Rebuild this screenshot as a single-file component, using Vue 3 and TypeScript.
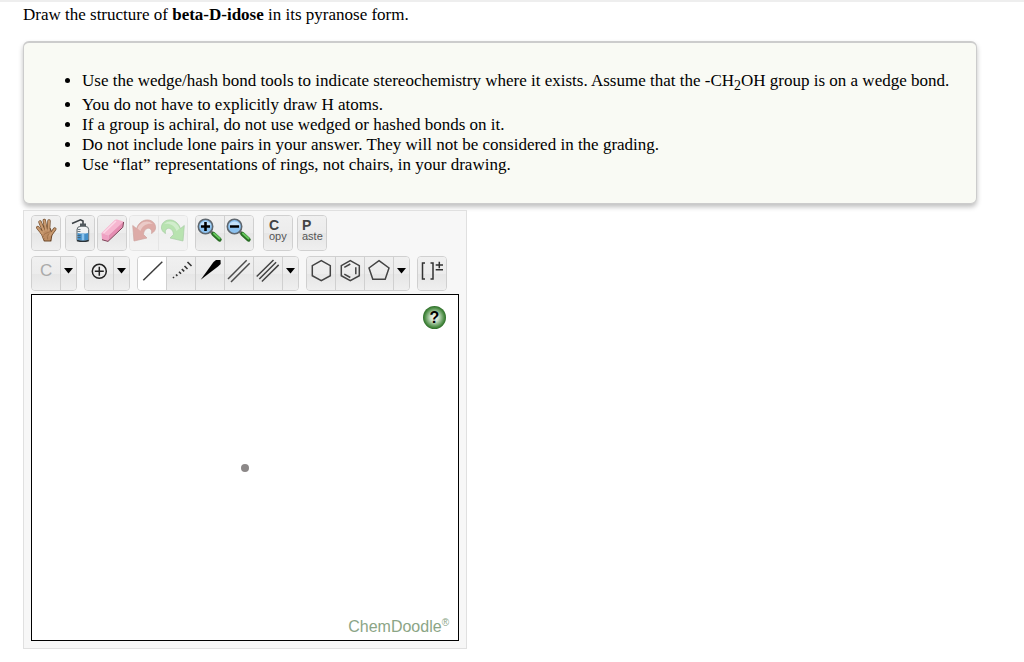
<script setup lang="ts">
import { ref } from 'vue'

interface Tool {
  id: string
  label: string
  disabled?: boolean
}

interface Group {
  gap: 'tight' | 'near' | 'apart' | 'wide'
  tools: Tool[]
}

const editRow: Group[] = [
  { gap: 'near', tools: [{ id: 'move', label: 'Move' }] },
  { gap: 'tight', tools: [{ id: 'clear', label: 'Clear' }] },
  { gap: 'tight', tools: [{ id: 'erase', label: 'Erase' }] },
  {
    gap: 'apart',
    tools: [
      { id: 'undo', label: 'Undo', disabled: true },
      { id: 'redo', label: 'Redo', disabled: true },
    ],
  },
  {
    gap: 'wide',
    tools: [
      { id: 'zoom-in', label: 'Increase scale' },
      { id: 'zoom-out', label: 'Decrease scale' },
    ],
  },
  { gap: 'near', tools: [{ id: 'copy', label: 'Copy' }] },
  { gap: 'tight', tools: [{ id: 'paste', label: 'Paste' }] },
]

const drawRow: Group[] = [
  {
    gap: 'apart',
    tools: [
      { id: 'carbon', label: 'Carbon' },
      { id: 'more-elements', label: 'More elements' },
    ],
  },
  {
    gap: 'apart',
    tools: [
      { id: 'charge', label: 'Increase charge' },
      { id: 'more-charges', label: 'More attributes' },
    ],
  },
  {
    gap: 'apart',
    tools: [
      { id: 'single', label: 'Single bond' },
      { id: 'hashed', label: 'Recessed bond' },
      { id: 'wedge', label: 'Protruding bond' },
      { id: 'double', label: 'Double bond' },
      { id: 'triple', label: 'Triple bond' },
      { id: 'more-bonds', label: 'More bonds' },
    ],
  },
  {
    gap: 'apart',
    tools: [
      { id: 'cyclohexane', label: 'Cyclohexane ring' },
      { id: 'benzene', label: 'Benzene ring' },
      { id: 'cyclopentane', label: 'Cyclopentane ring' },
      { id: 'more-rings', label: 'More rings' },
    ],
  },
  { gap: 'tight', tools: [{ id: 'brackets', label: 'Bracket with charge' }] },
]

const rows = [editRow, drawRow]
const active = ref('single')
const isMenu = (id: string): boolean => id.startsWith('more-')
const select = (tool: Tool): void => {
  if (!tool.disabled && !isMenu(tool.id)) active.value = tool.id
}
</script>

<template>
  <main class="page">
    <p class="question">Draw the structure of <b>beta-D-idose</b> in its pyranose form.</p>

    <section class="notes">
      <ul>
        <li>Use the wedge/hash bond tools to indicate stereochemistry where it exists. Assume that the -CH<sub>2</sub>OH group is on a wedge bond.</li>
        <li>You do not have to explicitly draw H atoms.</li>
        <li>If a group is achiral, do not use wedged or hashed bonds on it.</li>
        <li>Do not include lone pairs in your answer. They will not be considered in the grading.</li>
        <li>Use “flat” representations of rings, not chairs, in your drawing.</li>
      </ul>
    </section>

    <section class="sketcher">
      <div v-for="(row, r) in rows" :key="r" class="toolbar">
        <div v-for="(group, g) in row" :key="g" class="group" :class="group.gap">
          <button
            v-for="tool in group.tools"
            :key="tool.id"
            type="button"
            class="tool"
            :class="{ menu: isMenu(tool.id), active: active === tool.id }"
            :disabled="tool.disabled"
            :aria-label="tool.label"
            @click="select(tool)"
          >
            <svg v-if="isMenu(tool.id)" width="15" height="28" viewBox="0 0 15 28">
              <path d="M3 11h9l-4.500 5.500z" fill="#000" />
            </svg>
            <svg v-else width="28" height="28" viewBox="0 0 28 28" fill="none">
              <template v-if="tool.id === 'move'">
                <g stroke-linecap="round" stroke-linejoin="round">
                  <path d="M5.700 11.500L10.500 17.500M8 6L11.800 15M12.300 4.500L14 14M17 5L16.500 14M22.800 13L18 19.500" stroke="#6f4a2b" stroke-width="3.400" />
                  <path d="M9 15.500L18 13L19.500 18L18.500 24.500H12.500Z" fill="#6f4a2b" stroke="#6f4a2b" stroke-width="2" />
                  <path d="M9.500 16L17.500 13.500L19 18L18 24H13Z" fill="#bd8c63" stroke="#bd8c63" />
                  <path d="M5.700 11.500L10.500 17.500M8 6L11.800 15M12.300 4.500L14 14M17 5L16.500 14M22.800 13L18 19.500" stroke="#c99a70" stroke-width="2.100" />
                  <path d="M12 18.500C14 16.500 16 17 17.500 16M16.500 18Q14.500 20.500 15.500 23" stroke="#9b6d46" stroke-width=".8" />
                </g>
              </template>

              <template v-else-if="tool.id === 'clear'">
                <path d="M6 7.500L14.500 3.800L17 5V8.500" stroke="#3c4246" stroke-width="1.600" />
                <path d="M14 7.500h6v3h-6z" fill="#50585d" />
                <path d="M11 24.500V13.500Q11 10.300 15 10.300H19Q22.700 10.300 22.700 13.500V24.500Q17 26.300 11 24.500Z" fill="#f0f2f3" stroke="#5f676b" />
                <path d="M11.500 17Q17 18 22.200 17V24Q17 25.600 11.500 24Z" fill="#438fc9" />
                <path d="M17 17.800V24" stroke="#8ac3ed" stroke-width="2.500" />
                <path d="M11 24.500Q17 26.300 22.700 24.500" stroke="#293238" stroke-width="1.400" />
                <path d="M11.500 13.500h3M11.500 15.500h3M11.500 19.500h3M11.500 21.500h3" stroke="#4b5a64" stroke-width=".8" />
              </template>

              <template v-else-if="tool.id === 'erase'">
                <path d="M3.500 17L16.500 4.200Q17.500 3.200 19 3.600L25.500 5.500L10.500 19.500Z" fill="#f6b6d0" />
                <path d="M10.500 19.500L25.500 5.500L24.700 11L10 25.300Z" fill="#e58db2" />
                <path d="M3.500 17L10.500 19.500L10 25.300L4 23.500Z" fill="#efa0c2" />
                <path d="M5.500 17L18 5" stroke="#fbd8e6" stroke-width="1.500" />
                <path d="M4 23.700L10 25.400L24.800 11.300L25.600 6" stroke="#7c3e54" stroke-width="1" />
              </template>

              <g v-else-if="tool.id === 'undo'">
                <path d="M2.700 9.500L4 25L17 22L13.500 18.500C13.500 14.500 17 11.500 19.500 12.500C21.500 13.500 22 15 21.500 17.500C24.500 16 26.300 13 25.300 9.500C24 5 19 3 14.500 4.300C10.500 5.500 8 8.500 6.500 12.500Z" fill="#bf5148" stroke="#9c4037" stroke-width=".7" />
                <path d="M7.500 12.500C10 6 17 3 23 8C18 7 12.500 8.500 10.500 15Z" fill="#de9690" />
              </g>

              <g v-else-if="tool.id === 'redo'" transform="translate(28 0) scale(-1 1)">
                <path d="M2.700 9.500L4 25L17 22L13.500 18.500C13.500 14.500 17 11.500 19.500 12.500C21.500 13.500 22 15 21.500 17.500C24.500 16 26.300 13 25.300 9.500C24 5 19 3 14.500 4.300C10.500 5.500 8 8.500 6.500 12.500Z" fill="#6ccb5c" stroke="#499a42" stroke-width=".7" />
                <path d="M7.500 12.500C10 6 17 3 23 8C18 7 12.500 8.500 10.500 15Z" fill="#a5e29a" />
              </g>

              <template v-else-if="tool.id === 'zoom-in' || tool.id === 'zoom-out'">
                <path d="M14.500 15.500L18.500 18.500" stroke="#777" stroke-width="3" />
                <path d="M17.500 18L23.500 23.500" stroke="#286c24" stroke-width="4.400" stroke-linecap="round" />
                <path d="M18 17.500L23.500 22.500" stroke="#65c55c" stroke-width="2" stroke-linecap="round" />
                <circle cx="9.500" cy="10.500" r="7.200" fill="#8cc2f0" stroke="#5e666e" stroke-width="1.600" />
                <path d="M4 9a6 6 0 0 1 11 0q-5 3-11 0z" fill="#c4e2fa" />
                <path d="M5 10.500h9" stroke="#000" stroke-width="2.600" />
                <path v-if="tool.id === 'zoom-in'" d="M9.500 6v9" stroke="#000" stroke-width="2.600" />
              </template>

              <template v-else-if="tool.id === 'copy'">
                <text x="5" y="14" class="initial">C</text>
                <text x="5" y="24" class="rest">opy</text>
              </template>

              <template v-else-if="tool.id === 'paste'">
                <text x="4" y="14" class="initial">P</text>
                <text x="4" y="24" class="rest">aste</text>
              </template>

              <text v-else-if="tool.id === 'carbon'" x="8" y="19" class="element">C</text>

              <g v-else-if="tool.id === 'charge'" stroke="#222" stroke-width="1.500">
                <circle cx="14.300" cy="14.300" r="7" />
                <path d="M9.800 14.300h9M14.300 9.800v9" />
              </g>

              <path v-else-if="tool.id === 'single'" d="M5.300 23.300L24.300 4.700" stroke="#3c3c3c" stroke-width="1.500" />

              <path v-else-if="tool.id === 'hashed'" d="M6 20l1 1M9 17.500l1.400 1.400M12 14.700l2 2M14.800 12l2.400 2.400M17.500 9l3 3M20.500 5l4 4" stroke="#333" stroke-width="1.600" />

              <path v-else-if="tool.id === 'wedge'" d="M4.700 22.700L17.500 5L20 3H24.500L24.700 7L22 9.500Z" fill="#000" />

              <path v-else-if="tool.id === 'double'" d="M3 22L21.700 3.300M6 25L24.700 6.300" stroke="#4c4c4c" stroke-width="1.500" />

              <path v-else-if="tool.id === 'triple'" d="M2.700 19.500L19.500 3M5.300 22L22.100 5.300M7.900 24.500L24.700 7.900" stroke="#444" stroke-width="1.500" />

              <path v-else-if="tool.id === 'cyclohexane'" d="M14.300 3.700L23.300 8.700V18.700L14.300 23.700L5.300 18.700V8.700Z" stroke="#444" stroke-width="1.500" />

              <path v-else-if="tool.id === 'benzene'" d="M14.300 3.700L23.300 8.700V18.700L14.300 23.700L5.300 18.700V8.700ZM8.300 10.300L14.300 7M19.800 10.300V17.300M8.300 17.200L14.300 20.500" stroke="#444" stroke-width="1.500" />

              <path v-else-if="tool.id === 'cyclopentane'" d="M14 3.700L24 11L20.200 22.300H7.800L4 11Z" stroke="#444" stroke-width="1.500" />

              <path v-else-if="tool.id === 'brackets'" d="M7 6H4.500V22H7M12.500 6H15V22H12.500M17.700 8H25M21.300 4.700V11.300M17.700 12.700H25" stroke="#333" stroke-width="1.500" />
            </svg>
          </button>
        </div>
      </div>

      <div class="canvas">
        <button type="button" class="help" aria-label="Help">?</button>
        <span class="atom"></span>
        <span class="brand">ChemDoodle<sup>®</sup></span>
      </div>
    </section>
  </main>
</template>

<style>
body {
  margin: 0;
  background: #fff;
}
</style>

<style scoped>
.page {
  border-top: 2px solid #eee;
  padding: 3px 47px 12px 23px;
  font: 17px/20px "Liberation Serif", "Times New Roman", serif;
  color: #000;
}

.question {
  margin: 0 0 16px;
}

.notes {
  box-sizing: border-box;
  padding: 28px 8px;
  border: 1px solid #ccc;
  border-top-width: 2px;
  border-radius: 6px;
  background: #f9faf4;
  box-shadow: 0 3px 5px rgba(0, 0, 0, 0.25);
}

.notes ul {
  margin: 0;
  padding: 0 0 0 50px;
}

.notes li:first-child {
  padding-bottom: 4px;
}

.notes sub {
  font-size: 14px;
  line-height: 0;
}

.sketcher {
  width: fit-content;
  margin-top: 6px;
  padding: 4px 7px 7px;
  border: 1px solid #e0e0e0;
  background: #f7f7f7;
}

.toolbar {
  display: flex;
  margin-bottom: 5px;
}

.toolbar + .toolbar {
  margin-bottom: 3px;
}

.group {
  display: flex;
  box-sizing: border-box;
  height: 36px;
  border: 1px solid #d0d0d0;
  border-radius: 4px;
  overflow: hidden;
}

.toolbar + .toolbar .group {
  height: 35px;
}

.group:has(.tool:disabled) {
  opacity: 0.45;
}

.tight {
  margin-right: 2px;
}

.near {
  margin-right: 4px;
}

.apart {
  margin-right: 7px;
}

.wide {
  margin-right: 9px;
}

.tool {
  display: flex;
  align-items: flex-start;
  width: 28px;
  padding: 0;
  border: 0;
  background: linear-gradient(#f0f0f0, #ececec 50%, #e6e6e6 51%, #efefef);
}

.tool + .tool {
  box-sizing: content-box;
  border-left: 1px solid #d0d0d0;
}

.tool.menu {
  width: 15px;
}

.tool.active {
  background: #fff;
}

.tool svg {
  display: block;
  flex: none;
}

.initial {
  font: bold 14px "Liberation Sans", Arial, sans-serif;
  fill: #444;
}

.rest {
  font: 11px "Liberation Sans", Arial, sans-serif;
  fill: #555;
}

.element {
  font: 17px "Liberation Sans", Arial, sans-serif;
  fill: #aaa;
}

.canvas {
  position: relative;
  display: grid;
  place-items: center;
  box-sizing: border-box;
  width: 428px;
  height: 347px;
  border: 1px solid #000;
  background: #fff;
}

.atom {
  width: 8px;
  height: 8px;
  border-radius: 50%;
  background: #8c8888;
}

.help {
  position: absolute;
  top: 11px;
  right: 12px;
  width: 23px;
  height: 23px;
  padding: 0;
  border: 0;
  border-radius: 50%;
  background: radial-gradient(circle closest-side, #fff 0, #cfe2cc 35%, #4a8c43 85%, #2d6d28);
  font: bold 16px/23px "Liberation Sans", Arial, sans-serif;
  color: #000;
}

.brand {
  position: absolute;
  right: 9px;
  bottom: 4px;
  font: 16px/18px "Liberation Sans", Arial, sans-serif;
  color: #8ba586;
}

.brand sup {
  font-size: 10px;
  line-height: 0;
}
</style>
